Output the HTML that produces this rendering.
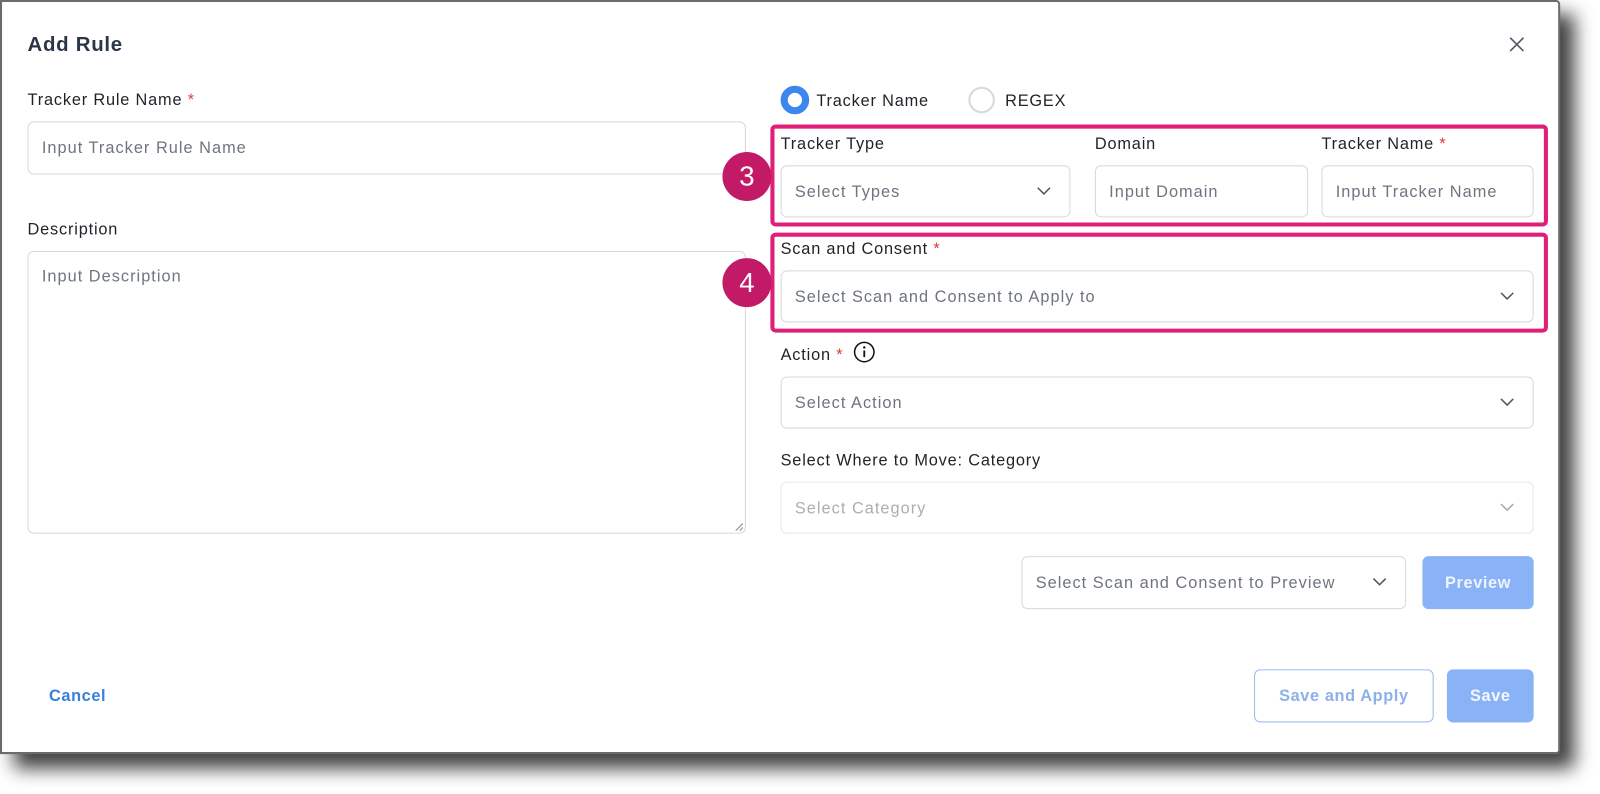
<!DOCTYPE html>
<html><head><meta charset="utf-8"><style>
*{box-sizing:border-box;margin:0;padding:0}
html,body{width:1600px;height:794px;overflow:hidden;background:#fff;font-family:"Liberation Sans",sans-serif}
#w{position:absolute;left:0;top:0;width:1568px;height:778px;transform:scale(1.0204);transform-origin:0 0}
.modal{position:absolute;left:0;top:0;width:1529px;height:739px;background:#fff;border:2px solid #6b6b6b;border-radius:0 4px 4px 0;box-shadow:14px 14px 18px rgba(0,0,0,.75)}
.a{position:absolute}
.lbl{position:absolute;font-size:16px;color:#1f2328;letter-spacing:0.8px;margin-top:2px}
.req{color:#e03b3b}
.inp{position:absolute;border:1px solid #d5d9df;border-radius:6px;background:#fff;font-size:16px;color:#6e7580;padding-left:13px;padding-top:2px;display:flex;align-items:center;letter-spacing:1px}
.chev{position:absolute;right:18px;top:50%;margin-top:-5px}
.pink{position:absolute;border:4px solid #df1f78;border-radius:5px}
.badge{position:absolute;width:48px;height:48px;border-radius:50%;background:#c21a67;color:#fff;font-size:27px;display:flex;align-items:center;justify-content:center}
.btn{position:absolute;border-radius:6px;font-size:16px;font-weight:bold;display:flex;align-items:center;justify-content:center;letter-spacing:0.6px;padding-top:2px}
</style></head><body><div id="w">
<div class="modal"></div>
<div class="a" style="left:27px;top:33px;font-size:20px;font-weight:bold;color:#2b3648;letter-spacing:0.7px">Add Rule</div>
<svg class="a" style="left:1479px;top:36px" width="15" height="15" viewBox="0 0 15 15"><path d="M1 1L14 14M14 1L1 14" stroke="#555c66" stroke-width="1.6"/></svg>

<div class="lbl" style="left:27px;top:88px">Tracker Rule Name <span class="req">*</span></div>
<div class="inp" style="left:27px;top:119px;width:704px;height:52px">Input Tracker Rule Name</div>
<div class="lbl" style="left:27px;top:215px">Description</div>
<div class="inp" style="left:27px;top:246px;width:704px;height:277px;align-items:flex-start;padding-top:16px">Input Description</div>
<svg class="a" style="left:720px;top:512px" width="9" height="9"><path d="M1 8L8 1M5 8L8 5" stroke="#888" stroke-width="1"/></svg>

<div class="a" style="left:765px;top:84px;width:28px;height:28px;border-radius:50%;border:7px solid #3d86ef;background:#fff"></div>
<div class="lbl" style="left:800px;top:89px">Tracker Name</div>
<div class="a" style="left:949px;top:85px;width:26px;height:26px;border-radius:50%;border:2px solid #d5d9df"></div>
<div class="lbl" style="left:985px;top:89px">REGEX</div>

<div class="pink" style="left:755px;top:122px;width:762px;height:100px"></div>
<div class="badge" style="left:708px;top:149px">3</div>
<div class="lbl" style="left:765px;top:131px">Tracker Type</div>
<div class="lbl" style="left:1073px;top:131px">Domain</div>
<div class="lbl" style="left:1295px;top:131px">Tracker Name <span class="req">*</span></div>
<div class="inp" style="left:765px;top:162px;width:284px;height:51px">Select Types<svg class="chev" width="14" height="9"><path d="M1 1L7 7L13 1" fill="none" stroke="#555" stroke-width="1.5"/></svg></div>
<div class="inp" style="left:1073px;top:162px;width:209px;height:51px">Input Domain</div>
<div class="inp" style="left:1295px;top:162px;width:208px;height:51px">Input Tracker Name</div>

<div class="pink" style="left:755px;top:228px;width:762px;height:98px"></div>
<div class="badge" style="left:708px;top:253px">4</div>
<div class="lbl" style="left:765px;top:234px">Scan and Consent <span class="req">*</span></div>
<div class="inp" style="left:765px;top:265px;width:738px;height:51px">Select Scan and Consent to Apply to<svg class="chev" width="14" height="9"><path d="M1 1L7 7L13 1" fill="none" stroke="#555" stroke-width="1.5"/></svg></div>

<div class="lbl" style="left:765px;top:338px">Action <span class="req">*</span></div>
<svg class="a" style="left:836px;top:334px" width="22" height="22" viewBox="0 0 22 22"><circle cx="11" cy="11" r="9.5" fill="none" stroke="#111" stroke-width="1.5"/><path d="M11 9.5V16" stroke="#111" stroke-width="1.8"/><circle cx="11" cy="6.5" r="1.2" fill="#111"/></svg>
<div class="inp" style="left:765px;top:369px;width:738px;height:51px">Select Action<svg class="chev" width="14" height="9"><path d="M1 1L7 7L13 1" fill="none" stroke="#555" stroke-width="1.5"/></svg></div>
<div class="lbl" style="left:765px;top:441px">Select Where to Move: Category</div>
<div class="inp" style="left:765px;top:472px;width:738px;height:51px;color:#a9aeb5;border-color:#e4e7eb">Select Category<svg class="chev" width="14" height="9"><path d="M1 1L7 7L13 1" fill="none" stroke="#aaa" stroke-width="1.5"/></svg></div>

<div class="inp" style="left:1001px;top:545px;width:377px;height:52px">Select Scan and Consent to Preview<svg class="chev" width="14" height="9"><path d="M1 1L7 7L13 1" fill="none" stroke="#555" stroke-width="1.5"/></svg></div>
<div class="btn" style="left:1394px;top:545px;width:109px;height:52px;background:#8ab2f7;color:#eef3ff">Preview</div>

<div class="a" style="left:48px;top:674px;font-size:16px;font-weight:bold;color:#3a7fdc;letter-spacing:0.6px">Cancel</div>
<div class="btn" style="left:1229px;top:656px;width:176px;height:52px;border:1px solid #9bbbec;color:#8eb0ea;background:#fff">Save and Apply</div>
<div class="btn" style="left:1418px;top:656px;width:85px;height:52px;background:#8ab2f7;color:#f4f7ff">Save</div>
</div></body></html>
